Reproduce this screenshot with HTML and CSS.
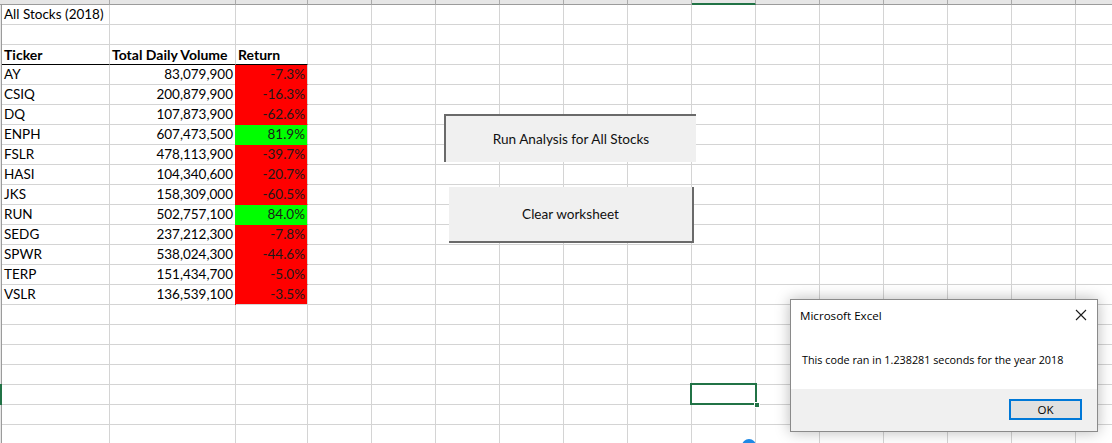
FILE: index.html
```html
<!DOCTYPE html>
<html lang="en">
<head>
<meta charset="utf-8">
<title>All Stocks (2018)</title>
<link rel="stylesheet" href="styles.css">
</head>
<body>
<div class="sheet">
  <div class="colhead">
    <div class="ch corner"></div>
    <div class="ch wa"></div>
    <div class="ch wb"></div>
    <div class="ch wc"></div>
    <div class="ch"></div>
    <div class="ch"></div>
    <div class="ch"></div>
    <div class="ch"></div>
    <div class="ch"></div>
    <div class="ch"></div>
    <div class="ch active"></div>
    <div class="ch"></div>
    <div class="ch"></div>
    <div class="ch"></div>
    <div class="ch"></div>
    <div class="ch"></div>
    <div class="ch"></div>
  </div>
  <div class="sheet-body">
    <div class="rowhead"><span class="rowhead-active"></span></div>
    <div class="table">
      <div class="c">All Stocks (2018)</div><div class="c"></div><div class="c"></div>
      <div class="c"></div><div class="c"></div><div class="c"></div>
      <div class="c hd">Ticker</div><div class="c hd">Total Daily Volume</div><div class="c hd">Return</div>
      <div class="c">AY</div><div class="c num">83,079,900</div><div class="c pct neg">-7.3%</div>
      <div class="c">CSIQ</div><div class="c num">200,879,900</div><div class="c pct neg">-16.3%</div>
      <div class="c">DQ</div><div class="c num">107,873,900</div><div class="c pct neg">-62.6%</div>
      <div class="c">ENPH</div><div class="c num">607,473,500</div><div class="c pct pos">81.9%</div>
      <div class="c">FSLR</div><div class="c num">478,113,900</div><div class="c pct neg">-39.7%</div>
      <div class="c">HASI</div><div class="c num">104,340,600</div><div class="c pct neg">-20.7%</div>
      <div class="c">JKS</div><div class="c num">158,309,000</div><div class="c pct neg">-60.5%</div>
      <div class="c">RUN</div><div class="c num">502,757,100</div><div class="c pct pos">84.0%</div>
      <div class="c">SEDG</div><div class="c num">237,212,300</div><div class="c pct neg">-7.8%</div>
      <div class="c">SPWR</div><div class="c num">538,024,300</div><div class="c pct neg">-44.6%</div>
      <div class="c">TERP</div><div class="c num">151,434,700</div><div class="c pct neg">-5.0%</div>
      <div class="c">VSLR</div><div class="c num">136,539,100</div><div class="c pct neg last">-3.5%</div>
      <div class="c"></div><div class="c"></div><div class="c"></div>
      <div class="c"></div><div class="c"></div><div class="c"></div>
      <div class="c"></div><div class="c"></div><div class="c"></div>
      <div class="c"></div><div class="c"></div><div class="c"></div>
      <div class="c"></div><div class="c"></div><div class="c"></div>
      <div class="c"></div><div class="c"></div><div class="c"></div>
      <div class="c"></div><div class="c"></div><div class="c"></div>
    </div>
    <div class="rest"></div>
  </div>

  <button class="shape-btn run-btn" type="button">Run Analysis for All Stocks</button>
  <button class="shape-btn clear-btn" type="button">Clear worksheet</button>

  <div class="sel-cell"><span class="sel-handle"></span></div>
  <span class="cursor-dot"></span>

  <div class="dialog" role="dialog">
    <div class="dlg-title">
      <span>Microsoft Excel</span>
      <svg class="dlg-close" width="12" height="12" viewBox="0 0 12 12"><path d="M1 1 L11 11 M11 1 L1 11" stroke="#1a1a1a" stroke-width="1.1" fill="none"/></svg>
    </div>
    <div class="dlg-body">This code ran in 1.238281 seconds for the year 2018</div>
    <div class="dlg-foot"><button class="dlg-ok" type="button">OK</button></div>
  </div>
</div>
</body>
</html>
```
FILE: styles.css
```css
* { box-sizing: border-box; }
html, body { margin: 0; padding: 0; background: #fff; }
.sheet {
  position: relative;
  width: 1112px;
  height: 443px;
  overflow: hidden;
  font-family: Lato, "Liberation Sans", sans-serif;
  font-size: 13.5px;
  color: #000;
}
.colhead {
  display: flex;
  height: 5px;
}
.ch {
  flex: 0 0 64px;
  height: 5px;
  background: #e6e6e6;
  border-right: 1px solid #ababab;
  border-bottom: 1px solid #9b9b9b;
}
.ch.corner { flex-basis: 2px; border-right: none; }
.ch.wa { flex-basis: 108px; }
.ch.wb { flex-basis: 126px; }
.ch.wc { flex-basis: 72px; }
.ch.active { border-bottom: 2px solid #217346; }

.sheet-body {
  display: flex;
  height: 438px;
}
.rowhead {
  position: relative;
  flex: 0 0 2px;
  background: #e6e6e6;
  border-right: 1px solid #9b9b9b;
}
.rowhead-active {
  position: absolute;
  left: 0;
  top: 379px;
  width: 2px;
  height: 21px;
  background: #217346;
}
.table {
  display: grid;
  grid-template-columns: 108px 126px 72px;
  grid-auto-rows: 20px;
}
.c {
  border-right: 1px solid #d4d4d4;
  border-bottom: 1px solid #d4d4d4;
  padding: 0 3px 0 2px;
  line-height: 19px;
  white-space: nowrap;
  overflow: visible;
}
.c.hd { font-weight: bold; font-size: 14px; border-bottom-color: #000; }
.c.num { text-align: right; padding-right: 2px; }
.c.pct { text-align: right; padding-right: 2px; color: #1a1a1a; }
.c.neg { background: #ff0000; border-bottom-color: #ff0000; box-shadow: -1px 0 0 #ff0000; }
.c.pos { background: #00ff00; border-bottom-color: #00ff00; box-shadow: -1px 0 0 #00ff00; }
.c.last { border-bottom-color: #d4d4d4; }

.rest {
  flex: 1;
  background-image:
    repeating-linear-gradient(to right, transparent 0 63px, #d4d4d4 63px 64px),
    repeating-linear-gradient(to bottom, transparent 0 19px, #d4d4d4 19px 20px);
}

.shape-btn {
  position: absolute;
  margin: 0;
  padding: 0;
  background: #f0f0f0;
  border: none;
  font-family: Lato, "Liberation Sans", sans-serif;
  font-size: 13.6px;
  color: #111;
  text-align: center;
}
.run-btn {
  left: 444px;
  top: 114px;
  width: 252px;
  height: 48px;
  border-top: 2px solid #6a6a6a;
  border-left: 2px solid #6a6a6a;
}
.clear-btn {
  left: 449px;
  top: 187px;
  width: 245px;
  height: 56px;
  border-right: 2px solid #6a6a6a;
  border-bottom: 2px solid #6a6a6a;
}

.sel-cell {
  position: absolute;
  left: 690px;
  top: 383px;
  width: 67px;
  height: 22px;
  border: 2px solid #217346;
}
.sel-handle {
  position: absolute;
  right: -5px;
  bottom: -5px;
  width: 6px;
  height: 6px;
  background: #217346;
  border: 1px solid #fff;
}
.cursor-dot {
  position: absolute;
  left: 742px;
  top: 439px;
  width: 14px;
  height: 14px;
  border-radius: 50%;
  background: #1e88e5;
}

.dialog {
  position: absolute;
  left: 790px;
  top: 299px;
  width: 308px;
  height: 133px;
  background: #fff;
  border: 1px solid #8a8a8a;
  box-shadow: 0 0 14px rgba(0, 0, 0, 0.28);
  display: flex;
  flex-direction: column;
  font-family: "Open Sans", "Noto Sans", sans-serif;
  color: #000;
}
.dlg-title {
  height: 30px;
  display: flex;
  align-items: center;
  justify-content: space-between;
  padding: 0 10px 0 9px;
  font-size: 11.6px;
}
.dlg-close { display: block; margin-right: 0; }
.dlg-body {
  flex: 1;
  padding: 22px 0 0 11px;
  font-size: 10.8px;
  line-height: 16px;
  white-space: nowrap;
}
.dlg-foot {
  height: 42px;
  background: #f0f0f0;
  display: flex;
  justify-content: flex-end;
  align-items: flex-start;
  padding: 10px 15px 0 0;
}
.dlg-ok {
  width: 73px;
  height: 21px;
  margin: 0;
  padding: 0;
  background: #e1e1e1;
  border: 2px solid #0078d7;
  font-family: "Open Sans", "Noto Sans", sans-serif;
  font-size: 11.5px;
  color: #000;
}
```
